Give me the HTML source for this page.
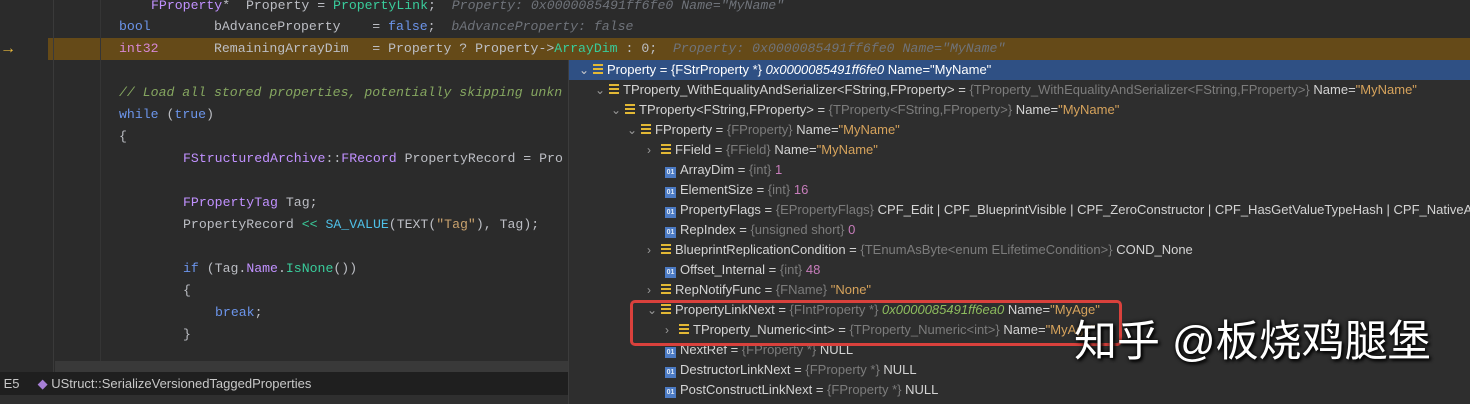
<!DOCTYPE html>
<html><head><meta charset="utf-8"><style>
body{margin:0;width:1470px;height:404px;overflow:hidden;background:#2b2b2b;position:relative;font-family:"Liberation Sans",sans-serif}
.code{position:absolute;left:0;top:0;width:1470px}
.ln{position:absolute;left:0;height:22px;line-height:22px;font-family:"Liberation Mono",monospace;font-size:13.2px;color:#bcbec4;white-space:pre}
.k{color:#6c95eb}.t{color:#c191ff}.i{color:#d688d4}.c{color:#85a660;font-style:italic}.h{color:#6f737a;font-style:italic}.f{color:#39cc9b}.s{color:#c9a26d}.m{color:#4fc1e9}
#pop{position:absolute;left:568px;top:60px;width:902px;height:344px;background:#2e2e2e;border-left:1px solid #3c3c3c;overflow:hidden}
.r{position:absolute;left:4px;width:902px;height:20px;line-height:20px;font-size:13px;color:#d4d4d4;white-space:nowrap}
.r .g{color:#7c7c7c}.r .y{color:#d6a35c}.r .n{color:#c77dbb}
.ic{display:inline-block;width:10px;height:11px;vertical-align:-1px;margin-right:4px;background:repeating-linear-gradient(#e2b835 0 2px,transparent 2px 4px)}
.o1{display:inline-block;width:11px;height:11px;background:#4c7bc4;color:#dfe8f5;font-size:7px;line-height:11px;text-align:center;vertical-align:0;margin-right:4px;font-weight:bold}
.ar{display:inline-block;width:14px;color:#9a9a9a;font-size:12px}
</style></head><body>
<div style="position:absolute;left:48px;top:38px;width:1422px;height:22px;background:#654a18"></div>
<div style="position:absolute;left:53px;top:0;width:1px;height:372px;background:#3a3a3a"></div>
<div style="position:absolute;left:100px;top:0;width:1px;height:372px;background:#353535"></div>
<div style="position:absolute;left:0;top:40px;color:#e8b93c;font-size:16px;line-height:18px">→</div>
<div class="code">
<div class="ln" style="top:-5px;left:151px"><span class="t">FProperty</span>*  Property = <span class="f">PropertyLink</span>;  <span class="h">Property: 0x0000085491ff6fe0 Name="MyName"</span></div>
<div class="ln" style="top:16px;left:119px"><span class="k">bool</span>        bAdvanceProperty    = <span class="k">false</span>;  <span class="h">bAdvanceProperty: false</span></div>
<div class="ln" style="top:38px;left:119px"><span class="i">int32</span>       RemainingArrayDim   = Property ? Property-&gt;<span class="f">ArrayDim</span> : 0;  <span class="h">Property: 0x0000085491ff6fe0 Name="MyName"</span></div>
<div class="ln" style="top:82px;left:119px"><span class="c">// Load all stored properties, potentially skipping unkn</span></div>
<div class="ln" style="top:104px;left:119px"><span class="k">while</span> (<span class="k">true</span>)</div>
<div class="ln" style="top:126px;left:119px">{</div>
<div class="ln" style="top:148px;left:183px"><span class="t">FStructuredArchive</span>::<span class="t">FRecord</span> PropertyRecord = Pro</div>
<div class="ln" style="top:192px;left:183px"><span class="t">FPropertyTag</span> Tag;</div>
<div class="ln" style="top:214px;left:183px">PropertyRecord <span class="f">&lt;&lt;</span> <span class="m">SA_VALUE</span>(TEXT(<span class="s">"Tag"</span>), Tag);</div>
<div class="ln" style="top:258px;left:183px"><span class="k">if</span> (Tag.<span class="t">Name</span>.<span class="f">IsNone</span>())</div>
<div class="ln" style="top:280px;left:183px">{</div>
<div class="ln" style="top:302px;left:215px"><span class="k">break</span>;</div>
<div class="ln" style="top:324px;left:183px">}</div>
</div>
<div style="position:absolute;left:55px;top:361px;width:513px;height:11px;background:#393939"></div>
<div style="position:absolute;left:0;top:372px;width:568px;height:23px;background:#1f1f1f;color:#c8c8c8;font-size:13px;line-height:23px;white-space:nowrap">&nbsp;E5 &nbsp;&nbsp;&nbsp;&nbsp;<span style="color:#a67fd6">◆</span> UStruct::SerializeVersionedTaggedProperties</div>
<div style="position:absolute;left:0;top:395px;width:568px;height:9px;background:#2f2f2f"></div>
<div id="pop">
<div class="r" style="top:0;left:0;padding-left:4px;background:#2f5084;color:#fff"><span class="ar" style="margin-left:6px;color:#ccc">⌄</span><span class="ic"></span>Property = {FStrProperty *} <i>0x0000085491ff6fe0</i> Name="MyName"</div>
<div class="r" style="top:20px"><span class="ar" style="margin-left:22px">⌄</span><span class="ic"></span>TProperty_WithEqualityAndSerializer&lt;FString,FProperty&gt; = <span class="g">{TProperty_WithEqualityAndSerializer&lt;FString,FProperty&gt;}</span> Name=<span class="y">"MyName"</span></div>
<div class="r" style="top:40px"><span class="ar" style="margin-left:38px">⌄</span><span class="ic"></span>TProperty&lt;FString,FProperty&gt; = <span class="g">{TProperty&lt;FString,FProperty&gt;}</span> Name=<span class="y">"MyName"</span></div>
<div class="r" style="top:60px"><span class="ar" style="margin-left:54px">⌄</span><span class="ic"></span>FProperty = <span class="g">{FProperty}</span> Name=<span class="y">"MyName"</span></div>
<div class="r" style="top:80px"><span class="ar" style="margin-left:74px">›</span><span class="ic"></span>FField = <span class="g">{FField}</span> Name=<span class="y">"MyName"</span></div>
<div class="r" style="top:100px"><span style="margin-left:92px" class="o1">01</span>ArrayDim = <span class="g">{int}</span> <span class="n">1</span></div>
<div class="r" style="top:120px"><span style="margin-left:92px" class="o1">01</span>ElementSize = <span class="g">{int}</span> <span class="n">16</span></div>
<div class="r" style="top:140px"><span style="margin-left:92px" class="o1">01</span>PropertyFlags = <span class="g">{EPropertyFlags}</span> CPF_Edit | CPF_BlueprintVisible | CPF_ZeroConstructor | CPF_HasGetValueTypeHash | CPF_NativeAccessSpecifierPublic</div>
<div class="r" style="top:160px"><span style="margin-left:92px" class="o1">01</span>RepIndex = <span class="g">{unsigned short}</span> <span class="n">0</span></div>
<div class="r" style="top:180px"><span class="ar" style="margin-left:74px">›</span><span class="ic"></span>BlueprintReplicationCondition = <span class="g">{TEnumAsByte&lt;enum ELifetimeCondition&gt;}</span> COND_None</div>
<div class="r" style="top:200px"><span style="margin-left:92px" class="o1">01</span>Offset_Internal = <span class="g">{int}</span> <span class="n">48</span></div>
<div class="r" style="top:220px"><span class="ar" style="margin-left:74px">›</span><span class="ic"></span>RepNotifyFunc = <span class="g">{FName}</span> <span class="y">"None"</span></div>
<div class="r" style="top:240px"><span class="ar" style="margin-left:74px">⌄</span><span class="ic"></span>PropertyLinkNext = <span class="g">{FIntProperty *}</span> <i style="color:#8dbc5e">0x0000085491ff6ea0</i> Name=<span class="y">"MyAge"</span></div>
<div class="r" style="top:260px"><span class="ar" style="margin-left:92px">›</span><span class="ic"></span>TProperty_Numeric&lt;int&gt; = <span class="g">{TProperty_Numeric&lt;int&gt;}</span> Name=<span class="y">"MyAge"</span></div>
<div class="r" style="top:280px"><span style="margin-left:92px" class="o1">01</span>NextRef = <span class="g">{FProperty *}</span> NULL</div>
<div class="r" style="top:300px"><span style="margin-left:92px" class="o1">01</span>DestructorLinkNext = <span class="g">{FProperty *}</span> NULL</div>
<div class="r" style="top:320px"><span style="margin-left:92px" class="o1">01</span>PostConstructLinkNext = <span class="g">{FProperty *}</span> NULL</div>
</div>
<div style="position:absolute;left:630px;top:300px;width:486px;height:40px;border:3px solid #d9413c;border-radius:5px"></div>
<div style="position:absolute;left:1074px;top:314px;font-family:'Liberation Sans','Noto Sans CJK SC',sans-serif;font-size:43px;line-height:56px;color:#fff;white-space:nowrap;text-shadow:2px 2px 3px #000,0 0 4px #000">知乎 @板烧鸡腿堡</div>
</body></html>
